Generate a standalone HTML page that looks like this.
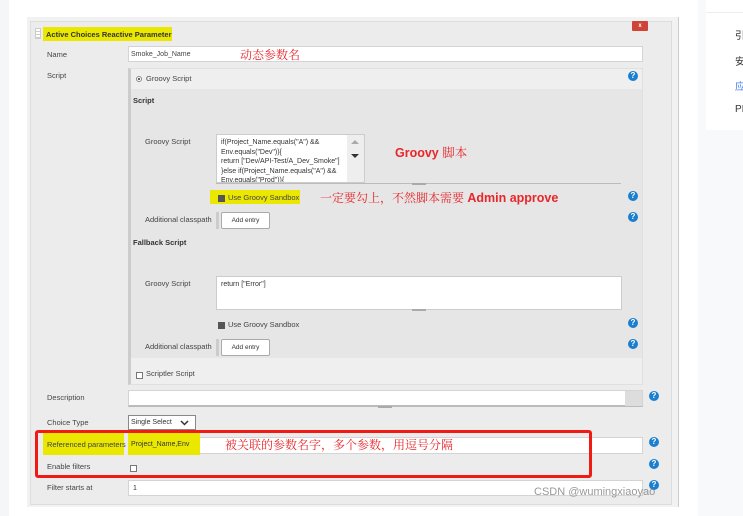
<!DOCTYPE html>
<html><head><meta charset="utf-8"><style>
*{margin:0;padding:0;box-sizing:border-box}
body{width:743px;height:516px;position:relative;overflow:hidden;background:#fff;font-family:"Liberation Sans","Noto Sans CJK SC",sans-serif;font-size:7.5px;color:#333}
.a{position:absolute}
.lbl{position:absolute;font-size:7.5px;color:#444;white-space:nowrap}
.inp{position:absolute;background:#fff;border:1px solid #d4d4d4}
.help{position:absolute;width:10px;height:10px;border-radius:50%;background:#1a7fd0;color:#fff;font-size:8px;font-weight:bold;text-align:center;line-height:10px}
.cb{position:absolute;width:7px;height:7px;border:1px solid #777;background:#fff}
.btn{position:absolute;background:#fff;border:1px solid #aaa;border-radius:2px;font-size:6.5px;text-align:center;line-height:15px;color:#333}
.red{position:absolute;color:#e8262a;white-space:nowrap;font-family:"Liberation Sans","Noto Serif CJK SC",serif}
.yl{position:absolute;background:#eae700}
</style></head><body>
<div class="a" style="left:0;top:0;width:9px;height:516px;background:#f5f6f8"></div>
<div class="a" style="left:698px;top:0;width:45px;height:516px;background:#f8f9fb"></div>
<div class="a" style="left:706px;top:0;width:37px;height:130px;background:#fff"></div>
<div class="a" style="left:706px;top:12px;width:37px;height:1px;background:#eee"></div>
<div class="a" style="left:735px;top:27px;font-size:10px;color:#333;font-family:'Noto Sans CJK SC',sans-serif">引</div>
<div class="a" style="left:735px;top:53px;font-size:10px;color:#333;font-family:'Noto Sans CJK SC',sans-serif">安</div>
<div class="a" style="left:735px;top:78px;font-size:10px;color:#4a7fe0;font-family:'Noto Sans CJK SC',sans-serif">应</div>
<div class="a" style="left:735px;top:104px;font-size:10px;color:#333">PI</div>

<div class="a" style="left:27px;top:17px;width:652px;height:490px;background:#f2f2f2;border-right:1px solid #ccc"></div>
<div class="a" style="left:30px;top:21px;width:642px;height:484px;background:#ececec;border:1px solid #ddd"></div>
<div class="a" style="left:35px;top:28px;width:6px;height:11px;border:1px solid #ccc;background:repeating-linear-gradient(#fff 0 2px,#ccc 2px 3px)"></div>
<div class="yl" style="left:43px;top:27px;width:129px;height:14px"></div>
<div class="a" style="left:46px;top:30px;font-size:7.5px;font-weight:bold;color:#333">Active Choices Reactive Parameter</div>
<div class="a" style="left:632px;top:21px;width:16px;height:10px;background:#d04437;border-radius:1px;color:#fff;font-size:6px;text-align:center;line-height:10px;font-weight:bold">x</div>

<div class="lbl" style="left:47px;top:50px">Name</div>
<div class="inp" style="left:128px;top:46px;width:515px;height:16px"></div>
<div class="a" style="left:131px;top:50px;font-size:7px;color:#444;line-height:9px">Smoke_Job_Name</div>
<div class="red" style="left:240px;top:46px;font-size:12px">动态参数名</div>

<div class="lbl" style="left:47px;top:71px">Script</div>
<div class="a" style="left:128px;top:68px;width:515px;height:317px;background:#efefef;border:1px solid #e0e0e0;border-left:3px solid #ccc"></div>
<div class="a" style="left:131px;top:89px;width:511px;height:269px;background:#e6e6e6"></div>
<div class="a" style="left:136px;top:76px;width:6px;height:6px;border-radius:50%;border:1px solid #888;background:radial-gradient(#555 35%,#fff 45%)"></div>
<div class="lbl" style="left:146px;top:74px">Groovy Script</div>
<div class="help" style="left:628px;top:71px">?</div>
<div class="a" style="left:133px;top:96px;font-weight:bold;font-size:7.5px;color:#333">Script</div>

<div class="lbl" style="left:145px;top:137px">Groovy Script</div>
<div class="inp" style="left:216px;top:134px;width:149px;height:49px;overflow:hidden;border-color:#ccc"><div style="padding:3px 0 0 4px;font-size:7px;line-height:9.5px;color:#333;white-space:nowrap;width:125px;overflow:hidden">if(Project_Name.equals("A") &amp;&amp;<br>Env.equals("Dev")){<br>return ["Dev/API-Test/A_Dev_Smoke"]<br>}else if(Project_Name.equals("A") &amp;&amp;<br>Env.equals("Prod")){</div></div>
<div class="a" style="left:347px;top:135px;width:17px;height:47px;background:#eee"></div>
<div class="a" style="left:351px;top:140px;border:4px solid transparent;border-bottom:4px solid #aaa;border-top:none"></div>
<div class="a" style="left:351px;top:154px;border:4px solid transparent;border-top:4px solid #333;border-bottom:none"></div>
<div class="a" style="left:216px;top:183px;width:405px;height:1px;background:#bbb"></div>
<div class="a" style="left:412px;top:183px;width:14px;height:2px;background:#aaa"></div>
<div class="red" style="left:395px;top:143px;font-size:12.5px;font-weight:bold">Groovy <span style="font-weight:normal">脚本</span></div>

<div class="yl" style="left:210px;top:190px;width:90px;height:14px"></div>
<div class="cb" style="left:218px;top:195px;background:#555;border-color:#555"></div>
<div class="lbl" style="left:228px;top:193px">Use Groovy Sandbox</div>
<div class="red" style="left:320px;top:189px;font-size:12px">一定要勾上，不然脚本需要 <b style="font-family:'Liberation Sans',sans-serif;font-size:12.5px">Admin approve</b></div>
<div class="help" style="left:628px;top:191px">?</div>

<div class="lbl" style="left:145px;top:215px">Additional classpath</div>
<div class="a" style="left:216px;top:212px;width:3px;height:17px;background:#ccc"></div>
<div class="btn" style="left:221px;top:212px;width:49px;height:17px">Add entry</div>
<div class="help" style="left:628px;top:212px">?</div>
<div class="a" style="left:133px;top:238px;font-weight:bold;font-size:7.5px;color:#333">Fallback Script</div>

<div class="lbl" style="left:145px;top:279px">Groovy Script</div>
<div class="inp" style="left:216px;top:276px;width:406px;height:34px;border-color:#ccc"><div style="padding:4px 0 0 4px;font-size:7px">return ["Error"]</div></div>
<div class="a" style="left:412px;top:309px;width:14px;height:2px;background:#aaa"></div>
<div class="cb" style="left:218px;top:322px;background:#555;border-color:#555"></div>
<div class="lbl" style="left:228px;top:320px">Use Groovy Sandbox</div>
<div class="help" style="left:628px;top:318px">?</div>
<div class="lbl" style="left:145px;top:342px">Additional classpath</div>
<div class="a" style="left:216px;top:339px;width:3px;height:17px;background:#ccc"></div>
<div class="btn" style="left:221px;top:339px;width:49px;height:17px">Add entry</div>
<div class="help" style="left:628px;top:339px">?</div>
<div class="cb" style="left:136px;top:372px"></div>
<div class="lbl" style="left:146px;top:369px">Scriptler Script</div>

<div class="lbl" style="left:47px;top:393px">Description</div>
<div class="inp" style="left:128px;top:390px;width:515px;height:17px;border-bottom:2px solid #bbb"></div>
<div class="a" style="left:625px;top:391px;width:17px;height:15px;background:#ddd"></div>
<div class="a" style="left:378px;top:406px;width:14px;height:2px;background:#aaa"></div>
<div class="help" style="left:649px;top:391px">?</div>

<div class="lbl" style="left:47px;top:418px">Choice Type</div>
<div class="inp" style="left:128px;top:415px;width:68px;height:15px;border-color:#888"><div style="padding:3px 0 0 2px;font-size:7px">Single Select</div></div>
<svg class="a" style="left:180px;top:419px" width="9" height="7"><path d="M1 2 L4.5 5.5 L8 2" stroke="#333" stroke-width="1.5" fill="none"/></svg>

<div class="yl" style="left:43px;top:433px;width:81px;height:22px"></div>
<div class="lbl" style="left:47px;top:440px">Referenced parameters</div>
<div class="inp" style="left:128px;top:437px;width:515px;height:17px"></div>
<div class="yl" style="left:128px;top:433px;width:72px;height:22px"></div>
<div class="a" style="left:131px;top:441px;font-size:7px;color:#333">Project_Name,Env</div>
<div class="red" style="left:225px;top:436px;font-size:12px">被关联的参数名字，多个参数，用逗号分隔</div>
<div class="help" style="left:649px;top:437px">?</div>
<div class="lbl" style="left:47px;top:462px">Enable filters</div>
<div class="cb" style="left:130px;top:465px"></div>
<div class="help" style="left:649px;top:459px">?</div>
<div class="a" style="left:35px;top:430px;width:557px;height:48px;border:3px solid #f01c14;border-radius:3px"></div>

<div class="lbl" style="left:47px;top:483px">Filter starts at</div>
<div class="inp" style="left:128px;top:480px;width:515px;height:16px"><div style="padding:4px 0 0 4px;font-size:7px">1</div></div>
<div class="help" style="left:649px;top:480px">?</div>
<div class="a" style="left:534px;top:486px;font-size:11px;color:#888;white-space:nowrap;opacity:.85">CSDN @wumingxiaoyao</div>
</body></html>
